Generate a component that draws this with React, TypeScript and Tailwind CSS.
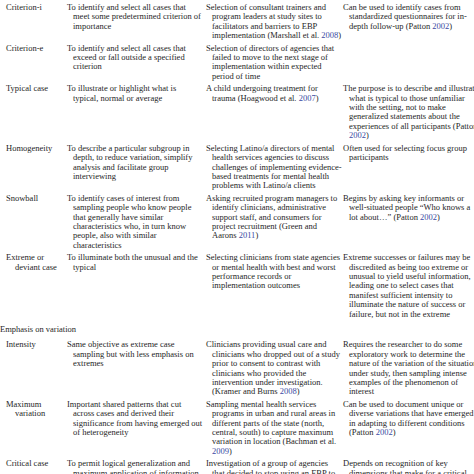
import React from "react";

type Cell = string[];
type Row = { label: string[]; c2: Cell; c3: Cell; c4: Cell };

const rows1: Row[] = [
  {
    label: ["Criterion-i"],
    c2: ["To identify and select all cases that", "meet some predetermined criterion of", "importance"],
    c3: ["Selection of consultant trainers and", "program leaders at study sites to", "facilitators and barriers to EBP", "implementation (Marshall et al. {2008})"],
    c4: ["Can be used to identify cases from", "standardized questionnaires for in-", "depth follow-up (Patton {2002})"],
  },
  {
    label: ["Criterion-e"],
    c2: ["To identify and select all cases that", "exceed or fall outside a specified", "criterion"],
    c3: ["Selection of directors of agencies that", "failed to move to the next stage of", "implementation within expected", "period of time"],
    c4: [],
  },
  {
    label: ["Typical case"],
    c2: ["To illustrate or highlight what is", "typical, normal or average"],
    c3: ["A child undergoing treatment for", "trauma (Hoagwood et al. {2007})"],
    c4: ["The purpose is to describe and illustrate", "what is typical to those unfamiliar", "with the setting, not to make", "generalized statements about the", "experiences of all participants (Patton", "{2002})"],
  },
  {
    label: ["Homogeneity"],
    c2: ["To describe a particular subgroup in", "depth, to reduce variation, simplify", "analysis and facilitate group", "interviewing"],
    c3: ["Selecting Latino/a directors of mental", "health services agencies to discuss", "challenges of implementing evidence-", "based treatments for mental health", "problems with Latino/a clients"],
    c4: ["Often used for selecting focus group", "participants"],
  },
  {
    label: ["Snowball"],
    c2: ["To identify cases of interest from", "sampling people who know people", "that generally have similar", "characteristics who, in turn know", "people, also with similar", "characteristics"],
    c3: ["Asking recruited program managers to", "identify clinicians, administrative", "support staff, and consumers for", "project recruitment (Green and", "Aarons {2011})"],
    c4: ["Begins by asking key informants or", "well-situated people \u201cWho knows a", "lot about\u2026\u201d (Patton {2002})"],
  },
  {
    label: ["Extreme or", "deviant case"],
    c2: ["To illuminate both the unusual and the", "typical"],
    c3: ["Selecting clinicians from state agencies", "or mental health with best and worst", "performance records or", "implementation outcomes"],
    c4: ["Extreme successes or failures may be", "discredited as being too extreme or", "unusual to yield useful information,", "leading one to select cases that", "manifest sufficient intensity to", "illuminate the nature of success or", "failure, but not in the extreme"],
  },
];

const rows2: Row[] = [
  {
    label: ["Intensity"],
    c2: ["Same objective as extreme case", "sampling but with less emphasis on", "extremes"],
    c3: ["Clinicians providing usual care and", "clinicians who dropped out of a study", "prior to consent to contrast with", "clinicians who provided the", "intervention under investigation.", "(Kramer and Burns {2008})"],
    c4: ["Requires the researcher to do some", "exploratory work to determine the", "nature of the variation of the situation", "under study, then sampling intense", "examples of the phenomenon of", "interest"],
  },
  {
    label: ["Maximum", "variation"],
    c2: ["Important shared patterns that cut", "across cases and derived their", "significance from having emerged out", "of heterogeneity"],
    c3: ["Sampling mental health services", "programs in urban and rural areas in", "different parts of the state (north,", "central, south) to capture maximum", "variation in location (Bachman et al.", "{2009})"],
    c4: ["Can be used to document unique or", "diverse variations that have emerged", "in adapting to different conditions", "(Patton {2002})"],
  },
  {
    label: ["Critical case"],
    c2: ["To permit logical generalization and", "maximum application of information", "to other cases"],
    c3: ["Investigation of a group of agencies", "that decided to stop using an EBP to", "identify barriers"],
    c4: ["Depends on recognition of key", "dimensions that make for a critical", "case"],
  },
];

function Line({ text }: { text: string }) {
  const parts = text.split(/(\{[^}]+\})/);
  return (
    <>
      {parts.map((p, i) =>
        p.startsWith("{") ? (
          <span key={i} className="text-[#3b4aa3]">
            {p.slice(1, -1)}
          </span>
        ) : (
          <span key={i}>{p}</span>
        )
      )}
    </>
  );
}

function CellView({ lines, indent }: { lines: string[]; indent: string }) {
  return (
    <div className="flex flex-col">
      {lines.map((l, i) => (
        <div key={i} className={"whitespace-nowrap " + (i > 0 ? indent : "")}>
          <Line text={l} />
        </div>
      ))}
    </div>
  );
}

function RowView({ row }: { row: Row }) {
  return (
    <div className="grid grid-cols-[67px_139px_137px_140px] pb-[3px]">
      <div className="pl-[6px]">
        <CellView lines={row.label} indent="pl-[9px]" />
      </div>
      <CellView lines={row.c2} indent="pl-[6px]" />
      <CellView lines={row.c3} indent="pl-[6px]" />
      <CellView lines={row.c4} indent="pl-[6px]" />
    </div>
  );
}

export default function App() {
  return (
    <div
      className="w-[474px] h-[474px] overflow-hidden bg-white text-[#262626] text-[8.5px] leading-[9.4px] pt-[3px]"
      style={{ fontFamily: '"Liberation Serif", "Times New Roman", serif' }}
    >
      {rows1.map((r, i) => (
        <RowView key={i} row={r} />
      ))}
      <div className="pt-[3px] pb-[6px] whitespace-nowrap">Emphasis on variation</div>
      {rows2.map((r, i) => (
        <RowView key={i} row={r} />
      ))}
    </div>
  );
}
